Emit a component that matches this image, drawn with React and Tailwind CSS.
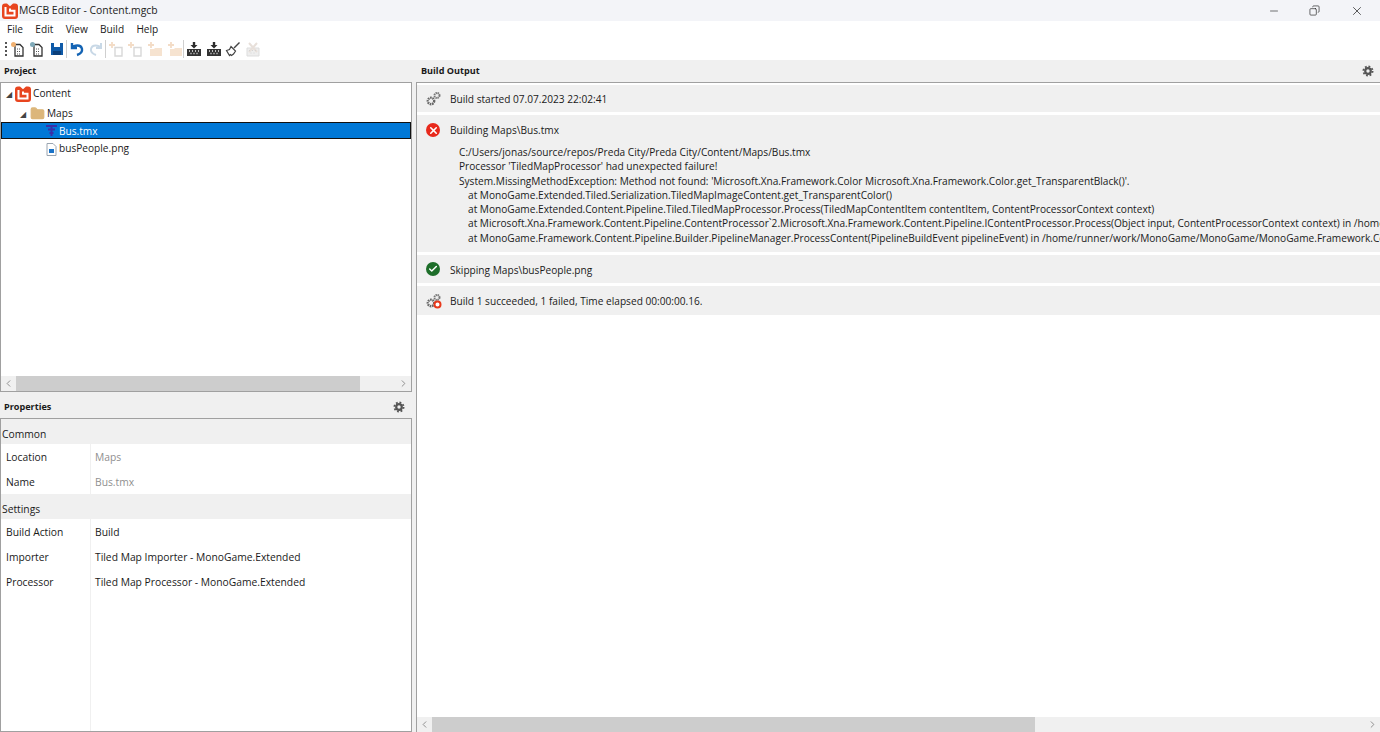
import { X, Minus, Copy, ChevronLeft, ChevronRight, Check, Folder } from "lucide-react";

function McgbLogo({ size = 16 }) {
  return (
    <svg width={size} height={size} viewBox="0 0 16 16" className="shrink-0">
      <path d="M3 0.500h2L8 3.300 11 0.500h2a3 3 0 0 1 3 3V13a3 3 0 0 1-3 3H3a3 3 0 0 1-3-3V3.500a3 3 0 0 1 3-3z" fill="#e8451f" />
      <path d="M3.500 4v8.500h9V7.800H8V5.500" fill="none" stroke="#fff" strokeWidth="2" />
    </svg>
  );
}

function Gear() {
  return (
    <svg width="12" height="12" viewBox="0 0 12 12" className="shrink-0">
      <circle cx="6" cy="6" r="4.600" fill="none" stroke="#555" strokeWidth="1.800" strokeDasharray="1.800 1.800" />
      <circle cx="6" cy="6" r="2.800" fill="none" stroke="#555" strokeWidth="2.200" />
    </svg>
  );
}

function NewIcon({ blue }) {
  return (
    <svg width="16" height="16" viewBox="0 0 16 16">
      <path d="M5 3.500h5l3 3v8.500H5z" fill="#fff" stroke="#333" strokeWidth="1.300" />
      <path d="M7 8h4M7 10.500h4M7 13h4" stroke="#555" strokeDasharray="1 1" />
      <circle cx="3.500" cy="3.500" r="2.500" fill={blue ? "#7fa9b8" : "#f0b070"} />
    </svg>
  );
}

function AddIcon({ folder }) {
  return (
    <svg width="16" height="16" viewBox="0 0 16 16">
      <path d="M1 4h6M4 1v6" stroke="#f3dcc6" strokeWidth="1.800" />
      {folder ? (
        <path d="M3 8h4l1-1h7v8H3z" fill="#f6e3d0" />
      ) : (
        <path d="M7 6.500h7V15H7z" fill="#fff" stroke="#d8d8d8" strokeWidth="1.400" />
      )}
    </svg>
  );
}

function BuildIcon() {
  return (
    <svg width="16" height="16" viewBox="0 0 16 16">
      <path d="M8 1v5" stroke="#2c2c2c" strokeWidth="2.400" />
      <path d="M4.500 4h7L8 7.500z" fill="#2c2c2c" />
      <path d="M1 8h14v7H1z" fill="#333" />
      <path d="M3 10h1M6 10h1M9 10h1M12 10h1M4.500 12.500h1M7.500 12.500h1M10.500 12.500h1" stroke="#eee" strokeWidth="1.400" />
    </svg>
  );
}

function CleanIcon() {
  return (
    <svg width="16" height="16" viewBox="0 0 16 16">
      <path d="M8.500 6.500l5.500-5.500 1 1-5.500 5.500z" fill="#444" />
      <path d="M6 5.500l4.500 4.500-2 3-2 1.500-1-1-1 1-3-5 3-1z" fill="#fff" stroke="#444" strokeWidth="1.200" />
    </svg>
  );
}

function CancelIcon() {
  return (
    <svg width="16" height="16" viewBox="0 0 16 16">
      <path d="M2 7h12v8H2z" fill="#eeeeee" stroke="#dddddd" />
      <path d="M4 2l8 9M12 2l-8 9" stroke="#e8e0da" strokeWidth="2" />
      <path d="M4 9.500h1M7 9.500h1M10 9.500h1M5.500 12h1M8.500 12h1" stroke="#d4d4d4" />
    </svg>
  );
}

function Gears({ failed }) {
  return (
    <svg width="16" height="16" viewBox="0 0 16 16" className="shrink-0">
      <circle cx="5" cy="10" r="3.200" fill="none" stroke="#666" strokeWidth="2.400" strokeDasharray="1.600 0.700" />
      <circle cx="11" cy="4.500" r="2.500" fill="none" stroke="#777" strokeWidth="2" strokeDasharray="1.400 0.600" />
      {failed && <circle cx="11.500" cy="11.500" r="3" fill="#fff" stroke="#e8391c" strokeWidth="2" />}
    </svg>
  );
}

function Tool({ children }) {
  return <div className="flex w-[19.6px] shrink-0 justify-center">{children}</div>;
}

function Sep() {
  return <div className="-ml-[1px] h-[18px] w-[1px] shrink-0 bg-[#cfcfcf]" />;
}

function OutputRow({ icon, text, className, headClass, children }) {
  return (
    <div className={`bg-[#f0f0f0] ${className}`}>
      <div className={`flex items-center pl-[9px] ${headClass}`}>
        <div className="w-[24px] shrink-0">{icon}</div>
        <span className="whitespace-nowrap pt-[2px]">{text}</span>
      </div>
      {children}
    </div>
  );
}

function PropGroup({ title }) {
  return <div className="flex h-[25px] items-center bg-[#f0f0f0] pl-[1px] pt-[7px]">{title}</div>;
}

function PropRow({ name, value, dim }) {
  return (
    <div className="flex h-[25px] items-center pt-[2px]">
      <div className="w-[89px] shrink-0 pl-[5px]">{name}</div>
      <div className={`pl-[5px] ${dim ? "text-[#8f8f8f]" : ""}`}>{value}</div>
    </div>
  );
}

function HScroll({ thumbWidth }) {
  return (
    <div className="flex h-[15px] shrink-0 items-center bg-[#f0f0f0]">
      <div className="flex w-[15px] shrink-0 justify-center"><ChevronLeft size={11} color="#888" /></div>
      <div className="flex h-full min-w-0 flex-1">
        <div style={{ width: thumbWidth }} className="h-full bg-[#cdcdcd]" />
      </div>
      <div className="flex w-[16px] shrink-0 justify-center"><ChevronRight size={11} color="#888" /></div>
    </div>
  );
}

const logLines = [
  ["pl-[42px]", "C:/Users/jonas/source/repos/Preda City/Preda City/Content/Maps/Bus.tmx"],
  ["pl-[42px]", "Processor 'TiledMapProcessor' had unexpected failure!"],
  ["pl-[42px]", "System.MissingMethodException: Method not found: 'Microsoft.Xna.Framework.Color Microsoft.Xna.Framework.Color.get_TransparentBlack()'."],
  ["pl-[51px]", "at MonoGame.Extended.Tiled.Serialization.TiledMapImageContent.get_TransparentColor()"],
  ["pl-[51px]", "at MonoGame.Extended.Content.Pipeline.Tiled.TiledMapProcessor.Process(TiledMapContentItem contentItem, ContentProcessorContext context)"],
  ["pl-[51px]", "at Microsoft.Xna.Framework.Content.Pipeline.ContentProcessor`2.Microsoft.Xna.Framework.Content.Pipeline.IContentProcessor.Process(Object input, ContentProcessorContext context) in /home/runner/work/MonoGame/MonoGame/MonoGame.Framework.Content.Pipeline/Processors/ContentProcessor.cs:line 60"],
  ["pl-[51px]", "at MonoGame.Framework.Content.Pipeline.Builder.PipelineManager.ProcessContent(PipelineBuildEvent pipelineEvent) in /home/runner/work/MonoGame/MonoGame/MonoGame.Framework.Content.Pipeline/Builder/PipelineManager.cs:line 700"],
];

export default function App() {
  return (
    <div className="flex h-[732px] w-[1380px] flex-col overflow-hidden bg-white font-['Open_Sans','Noto_Sans',sans-serif] text-[10.150px] text-[#1a1a1a]">
      <div className="flex h-[21px] shrink-0 items-center bg-[#f3f4f8] pl-[2px]">
        <McgbLogo />
        <span className="ml-[1px] text-[10.400px] text-[#222]">MGCB Editor - Content.mgcb</span>
        <div className="ml-auto flex items-center">
          <Minus size={12} strokeWidth={1.200} className="mr-[29px]" />
          <Copy size={11} strokeWidth={1.400} className="mr-[30px] -scale-x-100" />
          <X size={14} strokeWidth={1.200} className="mr-[16px]" />
        </div>
      </div>

      <div className="flex h-[18px] shrink-0 items-center gap-[12.300px] pl-[7px]">
        <span>File</span>
        <span>Edit</span>
        <span>View</span>
        <span>Build</span>
        <span>Help</span>
      </div>

      <div className="flex h-[21px] shrink-0 items-center pb-[2px] pl-[5px]">
        <div className="mr-[1px] h-[14px] border-l-2 border-dotted border-[#555]" />
        <Tool><NewIcon /></Tool>
        <Tool><NewIcon blue /></Tool>
        <Tool>
          <svg width="16" height="16" viewBox="0 0 16 16">
            <path d="M2 2h12v12H2z" fill="#0f5aa8" />
            <path d="M5 2h6v4H5z" fill="#fff" />
            <path d="M4 10h8v4H4z" fill="#0b3f7a" />
          </svg>
        </Tool>
        <Sep />
        <Tool>
          <svg width="16" height="16" viewBox="0 0 16 16" fill="none" stroke="#1464b4" strokeWidth="2.400">
            <path d="M3 2v5h5M3 7c2-3 9-4 10 1 .5 3-2 5-5 6" />
          </svg>
        </Tool>
        <Tool>
          <svg width="16" height="16" viewBox="0 0 16 16" fill="none" stroke="#c8d8e6" strokeWidth="2">
            <path d="M13 2v5H8M13 7c-2-3-9-4-10 1-.5 3 2 5 5 6" />
          </svg>
        </Tool>
        <Sep />
        <Tool><AddIcon /></Tool>
        <Tool><AddIcon /></Tool>
        <Tool><AddIcon folder /></Tool>
        <Tool><AddIcon folder /></Tool>
        <Sep />
        <Tool><BuildIcon /></Tool>
        <Tool><BuildIcon /></Tool>
        <Tool><CleanIcon /></Tool>
        <Tool><CancelIcon /></Tool>
      </div>

      <div className="flex min-h-0 flex-1 bg-[#f0f0f0]">
        <div className="flex w-[412px] shrink-0 flex-col">
          <div className="flex h-[22px] shrink-0 items-center pl-[4px] text-[9.100px] font-bold">Project</div>
          <div className="flex h-[310px] shrink-0 flex-col border border-[#a0a0a0] bg-white">
            <div className="min-h-0 flex-1">
              <div className="flex h-[20px] items-center pl-[5px] pt-[2px]">
                <span className="mr-[3px] text-[8px] text-[#444]">◢</span>
                <McgbLogo />
                <span className="ml-[2px]">Content</span>
              </div>
              <div className="flex h-[19px] items-center pl-[19px] pt-[2px]">
                <span className="mr-[4px] text-[8px] text-[#444]">◢</span>
                <Folder size={15} fill="#dcb67a" color="#dcb67a" />
                <span className="ml-[2px]">Maps</span>
              </div>
              <div className="flex h-[17px] items-center border border-[#111] bg-[#0078d7] pl-[43px] text-white">
                <svg width="13" height="13" viewBox="0 0 13 13" className="mr-[1px] shrink-0">
                  <path d="M1 2h11M3 5.500h7M4.500 9h4M6.500 2v10" stroke="#3a2fa8" strokeWidth="2" />
                </svg>
                <span className="pt-[2px]">Bus.tmx</span>
              </div>
              <div className="flex h-[18px] items-center pl-[45px] pt-[2px]">
                <svg width="11" height="13" viewBox="0 0 11 13" className="mr-[2px] shrink-0">
                  <path d="M1 .5h6l3 3v9H1z" fill="#fff" stroke="#9aa5b1" />
                  <path d="M3 6h5v4H3z" fill="#1a73c8" />
                </svg>
                <span>busPeople.png</span>
              </div>
            </div>
            <HScroll thumbWidth={344} />
          </div>
          <div className="flex h-[26px] shrink-0 items-center justify-between pl-[4px] pr-[7px] pt-[4px] text-[9.100px] font-bold">
            <span>Properties</span>
            <Gear />
          </div>
          <div className="min-h-0 flex-1 border border-[#a0a0a0] bg-white text-[10.300px]">
            <div className="relative h-full">
              <div className="absolute bottom-0 left-[89px] top-0 border-l border-[#f0f0f0]" />
              <div className="relative">
                <PropGroup title="Common" />
                <PropRow name="Location" value="Maps" dim />
                <PropRow name="Name" value="Bus.tmx" dim />
                <PropGroup title="Settings" />
                <PropRow name="Build Action" value="Build" />
                <PropRow name="Importer" value="Tiled Map Importer - MonoGame.Extended" />
                <PropRow name="Processor" value="Tiled Map Processor - MonoGame.Extended" />
              </div>
            </div>
          </div>
        </div>

        <div className="flex min-w-0 flex-1 flex-col pl-[4px]">
          <div className="flex h-[22px] shrink-0 items-center justify-between pl-[5px] pr-[6px] text-[9.100px] font-bold">
            <span>Build Output</span>
            <Gear />
          </div>
          <div className="flex min-h-0 flex-1 flex-col border-l border-t border-[#a0a0a0] bg-white">
            <div className="min-h-0 flex-1 overflow-hidden pt-[2px]">
              <OutputRow icon={<Gears />} text="Build started 07.07.2023 22:02:41" className="mb-[3px]" headClass="h-[27px]" />
              <OutputRow
                className="mb-[3px] pb-[7px]"
                headClass="h-[30px]"
                text="Building Maps\Bus.tmx"
                icon={
                  <span className="flex h-[14px] w-[14px] items-center justify-center rounded-full bg-[#e8291c]">
                    <X size={11} strokeWidth={3.500} color="#fff" />
                  </span>
                }
              >
                <div className="leading-[14.250px]">
                  {logLines.map(([indent, line]) => (
                    <div key={line} className={`whitespace-nowrap ${indent}`}>{line}</div>
                  ))}
                </div>
              </OutputRow>
              <OutputRow
                className="mb-[3px] pt-[1px]"
                headClass="h-[27px]"
                text="Skipping Maps\busPeople.png"
                icon={
                  <span className="flex h-[14px] w-[14px] items-center justify-center rounded-full bg-[#1e6e2a]">
                    <Check size={10} strokeWidth={3.500} color="#fff" />
                  </span>
                }
              />
              <OutputRow icon={<Gears failed />} text="Build 1 succeeded, 1 failed, Time elapsed 00:00:00.16." className="pt-[1px]" headClass="h-[28px]" />
            </div>
            <HScroll thumbWidth={603} />
          </div>
        </div>
      </div>
    </div>
  );
}
